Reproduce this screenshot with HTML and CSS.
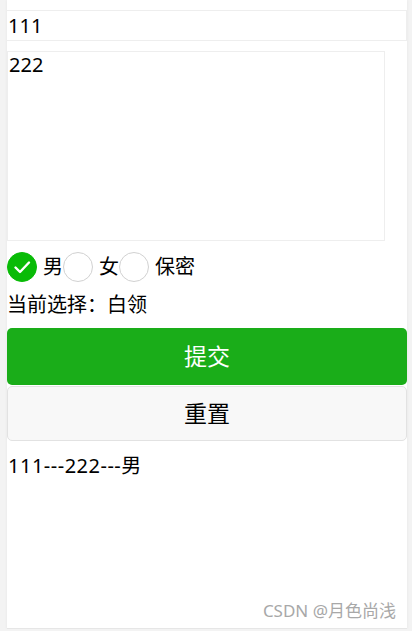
FILE: index.html
```html
<!DOCTYPE html>
<html lang="zh">
<head>
<meta charset="utf-8">
<title>form</title>
<link rel="stylesheet" href="styles.css">
</head>
<body>
<div class="page">
  <div class="input">111</div>
  <div class="textarea">222</div>
  <div class="radios">
    <span class="radio checked"><svg viewBox="0 0 30 30" width="30" height="30"><path d="M8.5 15.5 L13 20 L22 10.5" fill="none" stroke="#fff" stroke-width="2.4" stroke-linecap="round" stroke-linejoin="round"/></svg></span>
    <span class="label">男</span>
    <span class="radio"></span>
    <span class="label">女</span>
    <span class="radio"></span>
    <span class="label">保密</span>
  </div>
  <div class="current">当前选择：白领</div>
  <div class="btn primary">提交</div>
  <div class="btn default">重置</div>
  <div class="result">111---222---男</div>
  <div class="watermark">CSDN @月色尚浅</div>
</div>
</body>
</html>
```
FILE: styles.css
```css
html, body {
  margin: 0;
  padding: 0;
}
body {
  background: #f3f3f3;
  font-family: "Noto Sans", "Noto Sans CJK SC", sans-serif;
  color: #000;
}
.page {
  position: relative;
  width: 400px;
  height: 629px;
  margin-left: 7px;
  background: #fff;
  padding-top: 10px;
  box-sizing: border-box;
  box-shadow: 0 0 3px rgba(0,0,0,0.06);
  border-bottom: 1px solid #e6e6e6;
}
.input {
  height: 31px;
  border-top: 1px solid #eee;
  border-bottom: 1px solid #eee;
  border-right: 1px solid #eee;
  box-sizing: border-box;
  font-size: 20px;
  line-height: 29px;
  padding-left: 1px;
}
.textarea {
  margin-top: 10px;
  width: 378px;
  height: 190px;
  border: 1px solid #eee;
  box-sizing: border-box;
  font-size: 20px;
  line-height: 26px;
  padding-left: 1px;
}
.radios {
  margin-top: 10px;
  height: 32px;
  display: flex;
  align-items: center;
  font-size: 20px;
}
.radio {
  width: 30px;
  height: 30px;
  border-radius: 50%;
  border: 1px solid #d1d1d1;
  box-sizing: border-box;
  background: #fff;
  display: flex;
  align-items: center;
  justify-content: center;
  flex: none;
}
.radio.checked {
  background: #09bb07;
  border-color: #09bb07;
}
.radio svg {
  display: block;
  flex: none;
}
.label {
  margin-left: 6px;
  line-height: 30px;
}
.current {
  margin-top: 7px;
  font-size: 20px;
  line-height: 30px;
}
.btn {
  border-radius: 5px;
  box-sizing: border-box;
  text-align: center;
  font-size: 23px;
}
.primary {
  margin-top: 8px;
  height: 57px;
  line-height: 57px;
  background: #1aad19;
  color: #fff;
}
.default {
  margin-top: 1px;
  height: 55px;
  line-height: 53px;
  background: #f8f8f8;
  border: 1px solid #e2e2e2;
  color: #000;
}
.result {
  margin-top: 8px;
  font-size: 20px;
  line-height: 34px;
  padding-left: 1px;
  letter-spacing: 0.5px;
}
.watermark {
  position: absolute;
  right: 11px;
  bottom: 5px;
  font-size: 17px;
  color: #a8a8a8;
  line-height: 24px;
}
```
